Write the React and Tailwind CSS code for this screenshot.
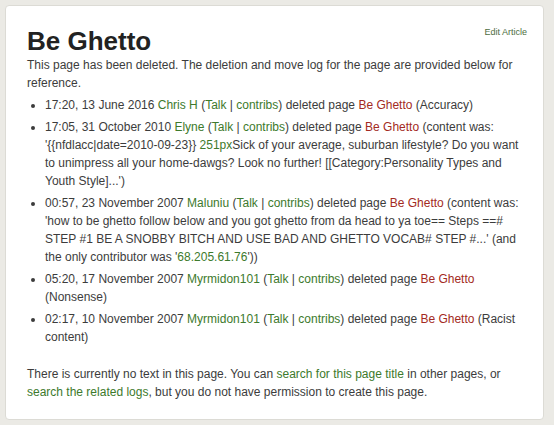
import React from "react";

const G = ({ children }) => <span className="text-[#3d7a2c]">{children}</span>;
const R = ({ children }) => <span className="text-[#a32a22]">{children}</span>;
const TC = () => (
  <>
    (<G>Talk</G> | <G>contribs</G>)
  </>
);

export default function App() {
  return (
    <div className="w-[554px] h-[425px] bg-[#ebeae5] p-[5px] font-['Liberation_Sans',Arial,sans-serif]">
      <div className="h-[415px] w-[539px] bg-white border border-[#dcdbd5] rounded-[4px] pl-[21px] pr-[16px] pt-[20px] text-[#3c3c3c] text-[12px] leading-[18px]">
        <div className="flex justify-between items-start">
          <h1 className="text-[26px] leading-[32px] font-bold text-[#222] mt-[-1px]">Be Ghetto</h1>
          <div className="text-[9px] leading-[10px] text-[#4d6e3e] mt-[1px]">Edit Article</div>
        </div>
        <p className="mt-[-1px] pr-[10px]">
          This page has been deleted. The deletion and move log for the page are provided below for reference.
        </p>
        <ul className="mt-[4px] pl-[18px] list-disc flex flex-col gap-[4px] pr-[1px]">
          <li>
            17:20, 13 June 2016 <G>Chris H</G> <TC /> deleted page <R>Be Ghetto</R> (Accuracy)
          </li>
          <li>
            17:05, 31 October 2010 <G>Elyne</G> <TC /> deleted page <R>Be Ghetto</R> (content was:
            '{"{{"}nfdlacc|date=2010-09-23{"}}"} <G>251px</G>Sick of your average, suburban lifestyle? Do you want to unimpress all your home-dawgs? Look no further! [[Category:Personality Types and Youth Style]...')
          </li>
          <li>
            00:57, 23 November 2007 <G>Maluniu</G> <TC /> deleted page <R>Be Ghetto</R> (content was:
            'how to be ghetto follow below and you got ghetto from da head to ya toe== Steps ==# STEP #1 BE A SNOBBY BITCH AND USE BAD AND GHETTO VOCAB# STEP #...' (and the only contributor was '<G>68.205.61.76</G>'))
          </li>
          <li>
            05:20, 17 November 2007 <G>Myrmidon101</G> <TC /> deleted page <R>Be Ghetto</R> (Nonsense)
          </li>
          <li>
            02:17, 10 November 2007 <G>Myrmidon101</G> <TC /> deleted page <R>Be Ghetto</R> (Racist content)
          </li>
        </ul>
        <p className="mt-[19px] pr-[10px]">
          There is currently no text in this page. You can <G>search for this page title</G> in other pages, or{" "}
          <G>search the related logs</G>, but you do not have permission to create this page.
        </p>
      </div>
    </div>
  );
}
